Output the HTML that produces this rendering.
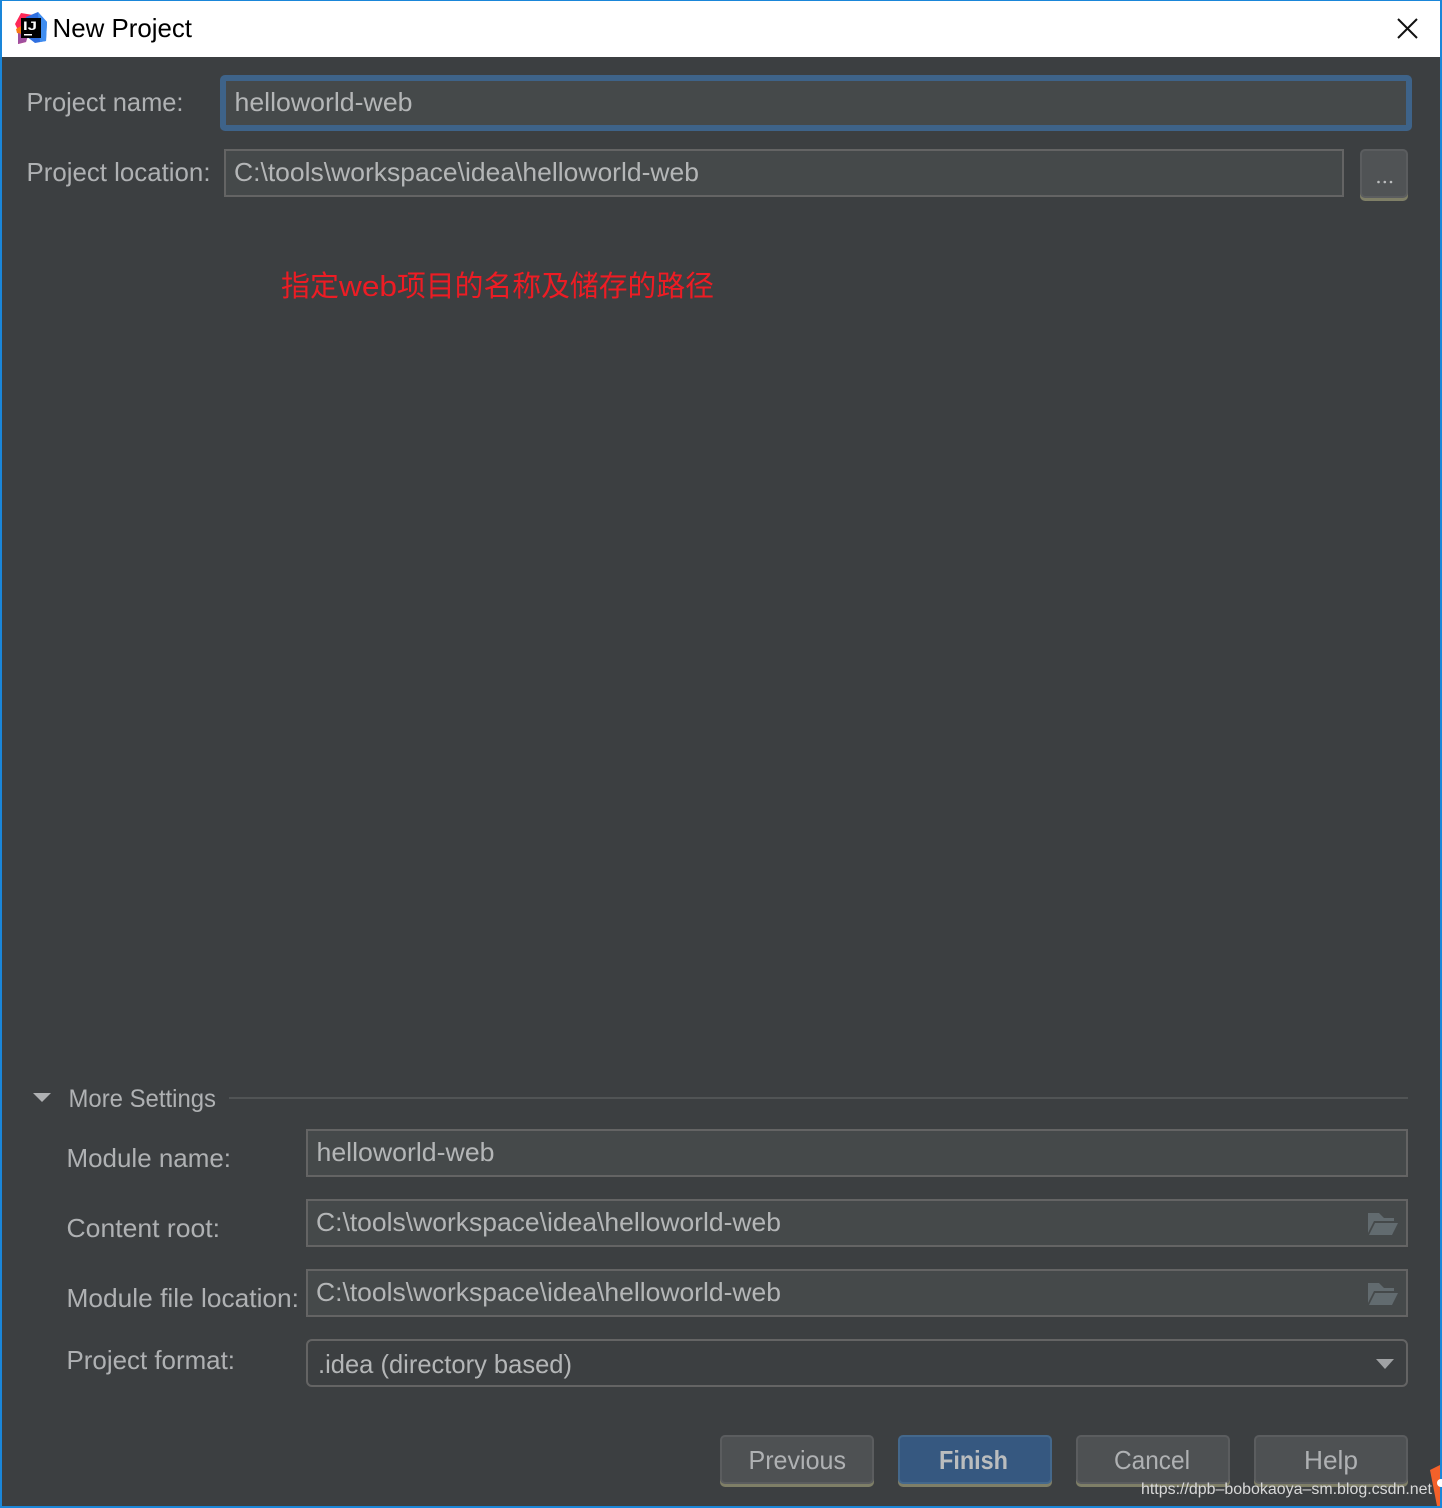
<!DOCTYPE html>
<html lang="zh">
<head>
<meta charset="utf-8">
<title>New Project</title>
<style>
html,body{margin:0;padding:0;width:1442px;height:1508px;overflow:hidden;background:#3c3f41}
svg{display:block}
text{font-family:"Liberation Sans","Noto Sans CJK SC",sans-serif;white-space:pre}
.l{font-size:26px;fill:#afb1b3}
.v{font-size:26px;fill:#b4b6b7}
.r{font-size:29px;fill:#ed1c24}
</style>
</head>
<body>
<svg width="1442" height="1508" viewBox="0 0 1442 1508" xmlns="http://www.w3.org/2000/svg">
<rect width="1442" height="1508" fill="#1a86d9"/>
<rect x="2" y="1" width="1438" height="56" fill="#ffffff"/>
<rect x="2" y="57" width="1438" height="1449" fill="#3c3f41"/>

<!-- logo -->
<polygon points="21,13 33,15 30,21 26,42 18,44 18,30 15,24" fill="#fe2857"/>
<polygon points="16,29 21,26 21,34 17,33" fill="#f97a12"/>
<polygon points="18,33 28,36 26,42 18,44" fill="#a04f9e"/>
<polygon points="26,17 38,12 47,22 46,41 35,43 26,36" fill="#2f6fe0"/>
<polygon points="38,12 47,22 46,41 40,42" fill="#3f8df0"/>
<rect x="21" y="18" width="20" height="20" fill="#000000"/>
<rect x="24" y="34" width="8" height="1.500" fill="#ffffff"/>
<text x="23" y="30" style="font-size:12px;font-weight:bold;fill:#fff" textLength="14" lengthAdjust="spacingAndGlyphs">IJ</text>
<text x="52.500" y="37" style="font-size:26px;fill:#000" textLength="139.500" lengthAdjust="spacingAndGlyphs">New Project</text>
<path d="M1398 19L1417 38M1417 19L1398 38" stroke="#111" stroke-width="2" fill="none"/>

<!-- project name -->
<text class="l" x="26.500" y="111" textLength="157" lengthAdjust="spacingAndGlyphs">Project name:</text>
<rect x="223" y="78" width="1186" height="50" rx="2" fill="#45494a" stroke="#3e6389" stroke-width="6"/>
<text class="v" x="234.500" y="111" textLength="178" lengthAdjust="spacingAndGlyphs">helloworld-web</text>

<!-- project location -->
<text class="l" x="26.500" y="181" textLength="184" lengthAdjust="spacingAndGlyphs">Project location:</text>
<rect x="225" y="150" width="1118" height="46" fill="#45494a" stroke="#646464" stroke-width="2"/>
<text class="v" x="234" y="181" textLength="465" lengthAdjust="spacingAndGlyphs">C:\tools\workspace\idea\helloworld-web</text>

<rect x="1360" y="153" width="48" height="48" rx="5" fill="#7f7f67"/>
<rect x="1361" y="150" width="46" height="47" rx="4" fill="#505355" stroke="#5b5d5f" stroke-width="2"/>
<circle cx="1378.500" cy="182" r="1.300" fill="#bbbdbe"/>
<circle cx="1384.800" cy="182" r="1.300" fill="#bbbdbe"/>
<circle cx="1391" cy="182" r="1.300" fill="#bbbdbe"/>

<!-- annotation -->
<text class="r" x="281" y="296" textLength="58" lengthAdjust="spacingAndGlyphs">指定</text>
<text class="r" x="339" y="296" textLength="58" lengthAdjust="spacingAndGlyphs">web</text>
<text class="r" x="397" y="296" textLength="317" lengthAdjust="spacingAndGlyphs">项目的名称及储存的路径</text>

<!-- more settings -->
<polygon points="33,1093 51,1093 42,1102" fill="#afb1b3"/>
<text class="l" x="68.500" y="1107" style="font-size:25px" textLength="147.500" lengthAdjust="spacingAndGlyphs">More Settings</text>
<rect x="229" y="1097" width="1179" height="2" fill="#515455"/>

<text class="l" x="66.500" y="1167" textLength="164.500" lengthAdjust="spacingAndGlyphs">Module name:</text>
<rect x="307" y="1130" width="1100" height="46" fill="#45494a" stroke="#646464" stroke-width="2"/>
<text class="v" x="316.500" y="1161" textLength="178" lengthAdjust="spacingAndGlyphs">helloworld-web</text>

<text class="l" x="66.500" y="1237" textLength="153.500" lengthAdjust="spacingAndGlyphs">Content root:</text>
<rect x="307" y="1200" width="1100" height="46" fill="#45494a" stroke="#646464" stroke-width="2"/>
<text class="v" x="316" y="1231" textLength="465" lengthAdjust="spacingAndGlyphs">C:\tools\workspace\idea\helloworld-web</text>
<path d="M1368 1213H1379L1384 1218H1394V1221H1374L1368 1233Z" fill="#626b6f"/>
<path d="M1375 1223H1398L1392 1235H1369Z" fill="#626b6f"/>

<text class="l" x="66.500" y="1307" textLength="232.500" lengthAdjust="spacingAndGlyphs">Module file location:</text>
<rect x="307" y="1270" width="1100" height="46" fill="#45494a" stroke="#646464" stroke-width="2"/>
<text class="v" x="316" y="1301" textLength="465" lengthAdjust="spacingAndGlyphs">C:\tools\workspace\idea\helloworld-web</text>
<path d="M1368 1283H1379L1384 1288H1394V1291H1374L1368 1303Z" fill="#626b6f"/>
<path d="M1375 1293H1398L1392 1305H1369Z" fill="#626b6f"/>

<text class="l" x="66.500" y="1369" textLength="168.500" lengthAdjust="spacingAndGlyphs">Project format:</text>
<rect x="307" y="1340" width="1100" height="46" rx="5" fill="#3c3f41" stroke="#646464" stroke-width="2"/>
<text class="v" x="318" y="1373" textLength="254" lengthAdjust="spacingAndGlyphs">.idea (directory based)</text>
<polygon points="1376,1359 1394,1359 1385,1369" fill="#a0a2a4"/>

<!-- buttons -->
<rect x="720" y="1439" width="154" height="48" rx="5" fill="#7f7f67"/>
<rect x="721" y="1436" width="152" height="47" rx="4" fill="#4e5153" stroke="#5b5d5f" stroke-width="2"/>
<text class="l" x="748.500" y="1469" textLength="97.500" lengthAdjust="spacingAndGlyphs">Previous</text>

<rect x="898" y="1439" width="154" height="48" rx="5" fill="#7f7f67"/>
<rect x="899" y="1436" width="152" height="47" rx="4" fill="#365880" stroke="#44688c" stroke-width="2"/>
<text x="939" y="1469" style="font-size:26px;font-weight:bold;fill:#bbbdbe" textLength="69" lengthAdjust="spacingAndGlyphs">Finish</text>

<rect x="1076" y="1439" width="154" height="48" rx="5" fill="#7f7f67"/>
<rect x="1077" y="1436" width="152" height="47" rx="4" fill="#4e5153" stroke="#5b5d5f" stroke-width="2"/>
<text class="l" x="1114" y="1469" textLength="76" lengthAdjust="spacingAndGlyphs">Cancel</text>

<rect x="1254" y="1439" width="154" height="48" rx="5" fill="#7f7f67"/>
<rect x="1255" y="1436" width="152" height="47" rx="4" fill="#4e5153" stroke="#5b5d5f" stroke-width="2"/>
<text class="l" x="1304" y="1469" textLength="54" lengthAdjust="spacingAndGlyphs">Help</text>

<!-- watermark -->
<text x="1141" y="1494" style="font-size:16px;fill:#d8d8d8" textLength="291" lengthAdjust="spacingAndGlyphs">https://dpb–bobokaoya–sm.blog.csdn.net</text>
<path d="M1430 1470L1440 1465V1506H1437Z" fill="#f4612a"/>
<circle cx="1441" cy="1483" r="4" fill="#ffffff"/>
</svg>
</body>
</html>
